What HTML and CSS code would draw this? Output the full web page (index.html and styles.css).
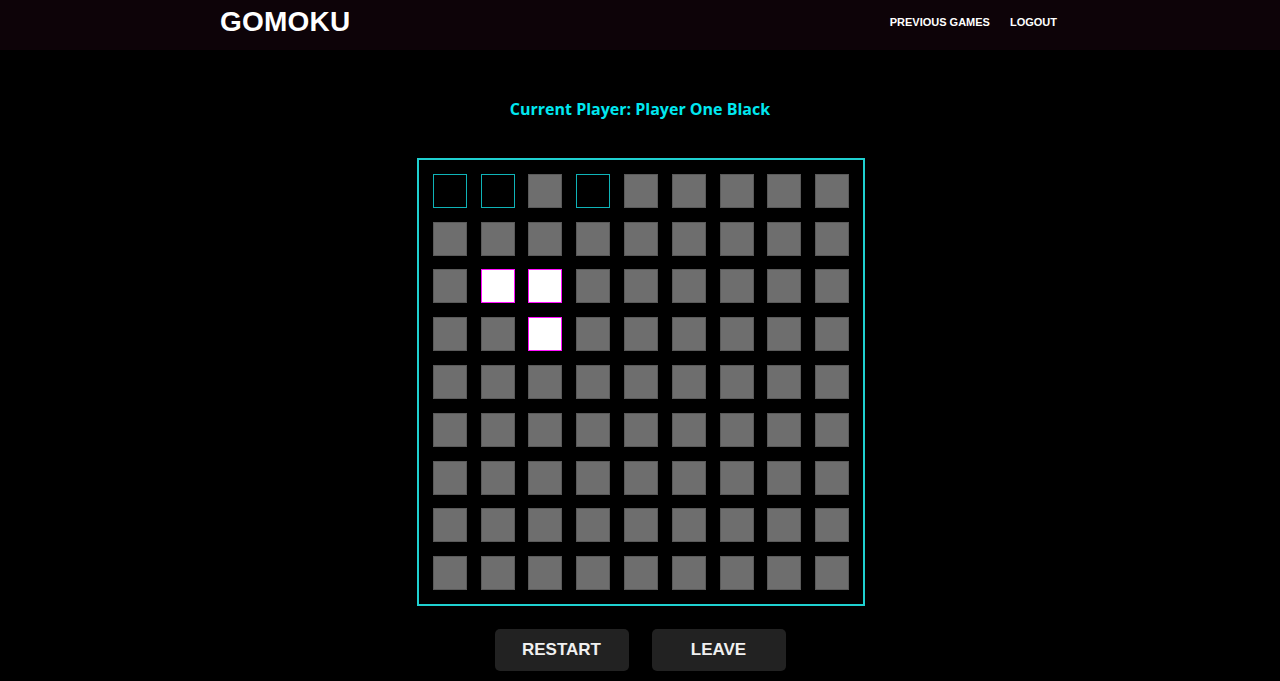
FILE: index.html
```html
<!DOCTYPE html>
<html>
<head>
<meta charset="utf-8">
<link rel="stylesheet" href="styles.css">
</head>
<body>
<header class="topbar">
  <div class="topbar-inner">
    <div class="logo">GOMOKU</div>
    <nav class="nav">
      <a class="nav-link">PREVIOUS GAMES</a>
      <a class="nav-link">LOGOUT</a>
    </nav>
  </div>
</header>
<main class="game">
  <h2 class="status">Current Player: Player One Black</h2>
  <div class="board">
    <div class="cell empty"></div><div class="cell empty"></div><div class="cell"></div><div class="cell empty"></div><div class="cell"></div><div class="cell"></div><div class="cell"></div><div class="cell"></div><div class="cell"></div>
    <div class="cell"></div><div class="cell"></div><div class="cell"></div><div class="cell"></div><div class="cell"></div><div class="cell"></div><div class="cell"></div><div class="cell"></div><div class="cell"></div>
    <div class="cell"></div><div class="cell white"></div><div class="cell white"></div><div class="cell"></div><div class="cell"></div><div class="cell"></div><div class="cell"></div><div class="cell"></div><div class="cell"></div>
    <div class="cell"></div><div class="cell"></div><div class="cell white"></div><div class="cell"></div><div class="cell"></div><div class="cell"></div><div class="cell"></div><div class="cell"></div><div class="cell"></div>
    <div class="cell"></div><div class="cell"></div><div class="cell"></div><div class="cell"></div><div class="cell"></div><div class="cell"></div><div class="cell"></div><div class="cell"></div><div class="cell"></div>
    <div class="cell"></div><div class="cell"></div><div class="cell"></div><div class="cell"></div><div class="cell"></div><div class="cell"></div><div class="cell"></div><div class="cell"></div><div class="cell"></div>
    <div class="cell"></div><div class="cell"></div><div class="cell"></div><div class="cell"></div><div class="cell"></div><div class="cell"></div><div class="cell"></div><div class="cell"></div><div class="cell"></div>
    <div class="cell"></div><div class="cell"></div><div class="cell"></div><div class="cell"></div><div class="cell"></div><div class="cell"></div><div class="cell"></div><div class="cell"></div><div class="cell"></div>
    <div class="cell"></div><div class="cell"></div><div class="cell"></div><div class="cell"></div><div class="cell"></div><div class="cell"></div><div class="cell"></div><div class="cell"></div><div class="cell"></div>
  </div>
  <div class="actions">
    <button class="btn">RESTART</button>
    <button class="btn">LEAVE</button>
  </div>
</main>
</body>
</html>
```
FILE: styles.css
```css
html, body {
  margin: 0;
  padding: 0;
  background: #000;
  font-family: "Liberation Sans", Arial, sans-serif;
}
.topbar {
  background: #0d0308;
  height: 50px;
}
.topbar-inner {
  width: 852px;
  margin: 0 auto;
  height: 44px;
  display: flex;
  align-items: center;
  justify-content: space-between;
  padding-left: 12px;
}
.logo {
  color: #fff;
  font-weight: bold;
  font-size: 28px;
  letter-spacing: 0.2px;
}
.nav {
  display: flex;
  gap: 20px;
  padding-right: 15px;
}
.nav-link {
  color: #fff;
  font-weight: bold;
  font-size: 11px;
}
.game {
  display: flex;
  flex-direction: column;
  align-items: center;
}
.status {
  margin: 48px 0 38px;
  color: #00e8f0;
  font-family: "Open Sans", sans-serif;
  font-weight: bold;
  font-size: 16px;
  line-height: 22px;
}
.board {
  width: 444px;
  height: 444px;
  margin-left: 2px;
  border: 2px solid #1fd0d0;
  display: grid;
  grid-template-columns: repeat(9, 34px);
  grid-template-rows: repeat(9, 34px);
  justify-content: space-evenly;
  align-content: space-evenly;
}
.cell {
  box-sizing: border-box;
  width: 34px;
  height: 34px;
  background: #6e6e6e;
  border: 1px solid #5a5a5a;
}
.cell.empty {
  background: #000;
  border: 1px solid #0fb3b8;
}
.cell.white {
  background: #fff;
  border: 1px solid #ff10ff;
}
.actions {
  display: flex;
  gap: 23px;
  margin-top: 23px;
}
.btn {
  width: 134px;
  height: 42px;
  background: #222;
  color: #f0f0f0;
  border: none;
  border-radius: 5px;
  font-family: "Liberation Sans", Arial, sans-serif;
  font-weight: bold;
  font-size: 17px;
}
```
